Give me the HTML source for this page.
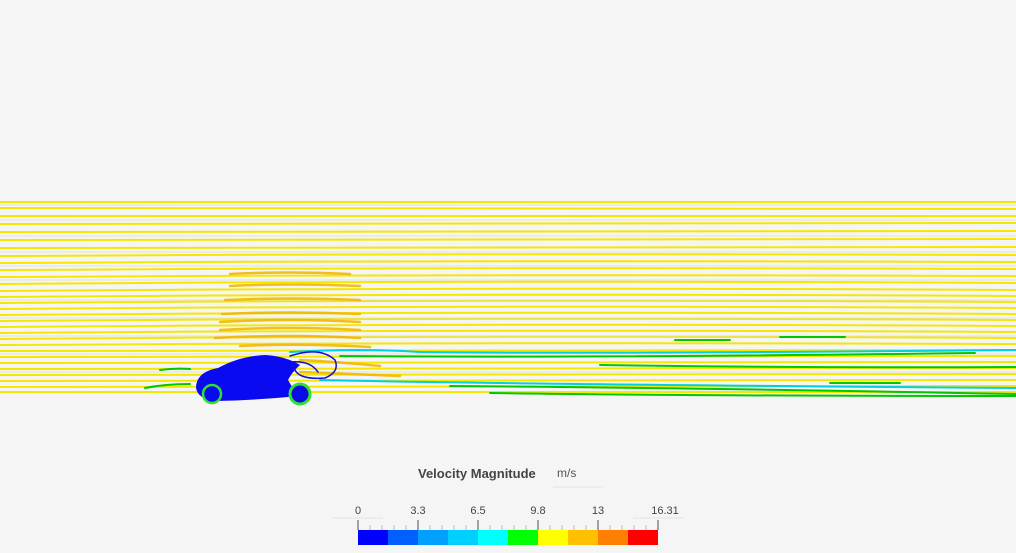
<!DOCTYPE html>
<html><head><meta charset="utf-8"><style>
html,body{margin:0;padding:0;background:#f5f5f5;width:1016px;height:553px;overflow:hidden;font-family:"Liberation Sans",sans-serif;}
svg{position:absolute;left:0;top:0}
</style></head><body>
<svg width="1016" height="553" viewBox="0 0 1016 553">
<g fill="none" stroke-linecap="round">
<g stroke="#f5e800" stroke-width="2">
<path d="M0 202 Q500 200 1016 202"/>
<path d="M0 208 Q500 207 1016 209"/>
<path d="M0 216 Q500 214 1016 216"/>
<path d="M0 224 Q500 222 1016 223"/>
<path d="M0 232 Q500 230 1016 231"/>
<path d="M0 240 Q500 238 1016 239"/>
<path d="M0 248 Q500 246 1016 247"/>
<path d="M0 256 Q500 253 1016 255"/>
<path d="M0 263 Q500 260 1016 262"/>
<path d="M0 270 Q500 267 1016 269"/>
<path d="M0 277 Q500 274 1016 276"/>
<path d="M0 284 Q500 280 1016 283"/>
<path d="M0 291 Q500 287 1016 290"/>
<path d="M0 297 Q500 293 1016 296"/>
<path d="M0 303 Q500 299 1016 302"/>
<path d="M0 309 Q500 305 1016 308"/>
<path d="M0 315 Q500 311 1016 314"/>
<path d="M0 321 Q500 317 1016 320"/>
<path d="M0 327 Q500 323 1016 326"/>
<path d="M0 333 Q500 329 1016 332"/>
<path d="M0 339 Q500 335 1016 338"/>
<path d="M0 345 Q500 342 1016 344"/>
<path d="M0 351 Q500 349 1016 350"/>
<path d="M0 357 Q500 355 1016 356"/>
<path d="M0 363 Q400 361 1016 362"/>
<path d="M0 369 Q400 367 1016 368"/>
<path d="M0 375 Q400 373 1016 374"/>
<path d="M0 381 Q400 379 1016 380"/>
<path d="M0 387 Q400 385 1016 386"/>
<path d="M0 392 Q400 391 1016 392"/>
</g>
<g stroke="#dcdcc0" stroke-width="1" opacity=".7">
<path d="M0 205 H1016"/><path d="M0 220 H1016"/><path d="M0 236 H1016"/><path d="M0 252 H1016"/><path d="M0 266 H1016"/><path d="M0 280 H1016"/><path d="M0 300 H1016"/><path d="M0 318 H1016"/><path d="M0 336 H1016"/><path d="M0 354 H1016"/><path d="M0 372 H1016"/>
</g>
<g stroke="#f2b400" stroke-width="2.5" opacity=".85">
<path d="M230 274 Q290 271 350 274"/>
<path d="M230 286 Q290 283 360 286"/>
<path d="M225 300 Q290 297 360 300"/>
<path d="M222 314 Q290 311 360 314"/>
<path d="M220 322 Q290 318 360 322"/>
<path d="M220 330 Q290 326 360 330"/>
<path d="M215 338 Q290 334 360 338"/>
<path d="M240 346 Q300 343 370 347"/>
<path d="M300 360 Q340 362 380 366"/>
<path d="M300 372 Q350 374 400 376"/>
</g>
<g stroke="#00d0e0" stroke-width="2">
<path d="M290 352 Q360 348 420 352 Q600 354 1016 350"/>
<path d="M320 380 Q500 384 1016 388"/>
</g>
<g stroke="#00c800" stroke-width="2">
<path d="M340 356 Q600 358 975 353"/>
<path d="M450 386 Q700 388 1016 394"/>
<path d="M490 393 Q700 396 1016 396"/>
<path d="M600 365 Q800 368 1016 367"/>
<path d="M160 370 Q175 368 190 369"/>
<path d="M145 388 Q165 384 190 384"/>
<path d="M675 340 H730"/><path d="M780 337 H845"/><path d="M830 383 H900"/>
</g>
<g stroke="#1010d0" stroke-width="1.5">
<path d="M290 356 Q320 346 335 360 Q340 372 325 378 Q300 380 295 370"/>
<path d="M290 362 Q310 360 318 372"/>
</g>
</g>
<path d="M196 388 Q196 372 218 368 Q240 356 265 355 Q285 356 300 365 Q292 372 288 380 Q295 392 298 396 Q260 400 215 401 Q198 399 196 388 Z" fill="#0a0af0"/>
<circle cx="212" cy="394" r="9" fill="#0a0af0" stroke="#30e030" stroke-width="2.5"/>
<circle cx="300" cy="394" r="10" fill="#0a0af0" stroke="#30e030" stroke-width="3"/>
<circle cx="300" cy="394" r="6.5" fill="#0a0af0" stroke="#1010b0" stroke-width="1"/>
<!-- legend -->
<text x="418" y="478" font-size="13" font-weight="bold" fill="#444">Velocity Magnitude</text>
<text x="557" y="477" font-size="12" fill="#555">m/s</text>
<line x1="553" y1="487" x2="603" y2="487" stroke="#e2e2e2"/>
<line x1="333" y1="518" x2="383" y2="518" stroke="#e2e2e2"/>
<line x1="633" y1="518" x2="683" y2="518" stroke="#e2e2e2"/>
<g font-size="11" fill="#444" text-anchor="middle">
<text x="358" y="514">0</text><text x="418" y="514">3.3</text><text x="478" y="514">6.5</text><text x="538" y="514">9.8</text><text x="598" y="514">13</text><text x="665" y="514">16.31</text>
</g>
<g stroke="#888" stroke-width="1">
<path d="M358 520V530M418 520V530M478 520V530M538 520V530M598 520V530M658 520V530" stroke-width="1.5"/>
<path d="M370 525V530M382 525V530M394 525V530M406 525V530M430 525V530M442 525V530M454 525V530M466 525V530M490 525V530M502 525V530M514 525V530M526 525V530M550 525V530M562 525V530M574 525V530M586 525V530M610 525V530M622 525V530M634 525V530M646 525V530" stroke="#bbb"/>
</g>
<rect x="358" y="530" width="30" height="15" fill="#0000ff"/>
<rect x="388" y="530" width="30" height="15" fill="#0060ff"/>
<rect x="418" y="530" width="30" height="15" fill="#00a0ff"/>
<rect x="448" y="530" width="30" height="15" fill="#00d0ff"/>
<rect x="478" y="530" width="30" height="15" fill="#00ffff"/>
<rect x="508" y="530" width="30" height="15" fill="#00ff00"/>
<rect x="538" y="530" width="30" height="15" fill="#ffff00"/>
<rect x="568" y="530" width="30" height="15" fill="#ffc000"/>
<rect x="598" y="530" width="30" height="15" fill="#ff8000"/>
<rect x="628" y="530" width="30" height="15" fill="#ff0000"/>
</svg>
</body></html>
